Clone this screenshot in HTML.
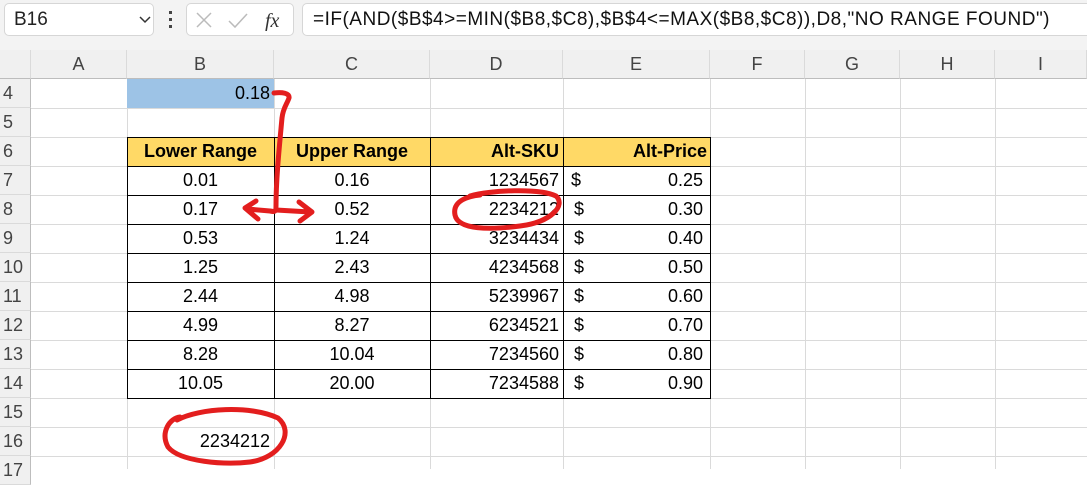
<!DOCTYPE html>
<html><head><meta charset="utf-8"><style>
*{margin:0;padding:0;box-sizing:border-box}
body{width:1087px;height:466px;overflow:hidden;background:#fff;font-family:"Liberation Sans",Arial,sans-serif;position:relative}
.top{position:absolute;left:0;top:0;width:1087px;height:50px;background:#f3f3f3}
.box{position:absolute;background:#fff;border:1px solid #d6d6d6;border-radius:5px}
.colh{position:absolute;top:50px;height:29px;background:#f0f0f0;border-bottom:1px solid #bdbdbd;color:#444;font-size:18px;text-align:center;line-height:29px;border-right:1px solid #dadada}
.rowh{position:absolute;left:0;width:31px;height:29px;background:#f0f0f0;border-right:1px solid #bdbdbd;border-bottom:1px solid #dadada;color:#444;font-size:18px;line-height:29px;padding-left:3px}
.c{position:absolute;height:29px;line-height:29px;font-size:18px;color:#000;white-space:nowrap}
.vl{position:absolute;top:79px;width:1px;height:390px;background:#dadada}
.hl{position:absolute;left:31px;width:1056px;height:1px;background:#dadada}
</style></head><body>
<div class="top"></div>
<div class="box" style="left:4px;top:3px;width:150px;height:33px"><span style="position:absolute;left:9px;top:5px;font-size:19px;color:#222">B16</span><svg style="position:absolute;left:134px;top:12px" width="12" height="8"><path d="M1 1 L6 6 L11 1" stroke="#333" stroke-width="1.5" fill="none"/></svg></div>
<div style="position:absolute;left:169px;top:11px;width:3px;height:17px"><div style="width:3px;height:3px;background:#444;margin-bottom:4px"></div><div style="width:3px;height:3px;background:#444;margin-bottom:4px"></div><div style="width:3px;height:3px;background:#444"></div></div>
<div class="box" style="left:186px;top:3px;width:108px;height:33px"><svg style="position:absolute;left:8px;top:7px" width="90" height="20"><path d="M2 2 L16 16 M16 2 L2 16" stroke="#bbb" stroke-width="1.5"/><path d="M34 10 L40 16 L52 3" stroke="#bbb" stroke-width="1.5" fill="none"/><text x="70" y="16" font-family="Liberation Serif" font-style="italic" font-size="20" fill="#333">fx</text></svg></div>
<div class="box" style="left:302px;top:3px;width:790px;height:33px"><span style="position:absolute;left:10px;top:5px;font-size:19px;color:#111;letter-spacing:0.5px">=IF(AND($B$4&gt;=MIN($B8,$C8),$B$4&lt;=MAX($B8,$C8)),D8,"NO RANGE FOUND")</span></div>

<div class="colh" style="left:0;width:31px"></div>
<div class="colh" style="left:31px;width:96px">A</div>
<div class="colh" style="left:127px;width:147px">B</div>
<div class="colh" style="left:274px;width:156px">C</div>
<div class="colh" style="left:430px;width:133px">D</div>
<div class="colh" style="left:563px;width:147px">E</div>
<div class="colh" style="left:710px;width:95px">F</div>
<div class="colh" style="left:805px;width:95px">G</div>
<div class="colh" style="left:900px;width:95px">H</div>
<div class="colh" style="left:995px;width:92px">I</div>

<div class="vl" style="left:127px"></div><div class="vl" style="left:274px"></div><div class="vl" style="left:430px"></div><div class="vl" style="left:563px"></div><div class="vl" style="left:710px"></div><div class="vl" style="left:805px"></div><div class="vl" style="left:900px"></div><div class="vl" style="left:995px"></div>
<div class="hl" style="top:108px"></div><div class="hl" style="top:137px"></div><div class="hl" style="top:166px"></div><div class="hl" style="top:195px"></div><div class="hl" style="top:224px"></div><div class="hl" style="top:253px"></div><div class="hl" style="top:282px"></div><div class="hl" style="top:311px"></div><div class="hl" style="top:340px"></div><div class="hl" style="top:369px"></div><div class="hl" style="top:398px"></div><div class="hl" style="top:427px"></div><div class="hl" style="top:456px"></div>

<div class="rowh" style="top:79px">4</div><div class="rowh" style="top:108px">5</div><div class="rowh" style="top:137px">6</div><div class="rowh" style="top:166px">7</div><div class="rowh" style="top:195px">8</div><div class="rowh" style="top:224px">9</div><div class="rowh" style="top:253px">10</div><div class="rowh" style="top:282px">11</div><div class="rowh" style="top:311px">12</div><div class="rowh" style="top:340px">13</div><div class="rowh" style="top:369px">14</div><div class="rowh" style="top:398px">15</div><div class="rowh" style="top:427px">16</div><div class="rowh" style="top:456px">17</div>

<div style="position:absolute;left:127px;top:79px;width:147px;height:29px;background:#9dc3e6"></div>
<div class="c" style="left:127px;top:79px;width:143px;text-align:right">0.18</div>

<div style="position:absolute;left:127px;top:137px;width:583px;height:29px;background:#ffd966"></div>
<div style="position:absolute;left:127px;top:137px;width:584px;height:262px;border:1px solid #000"></div>
<svg style="position:absolute;left:0;top:0" width="1087" height="466">
<g stroke="#000" stroke-width="1">
<path d="M274.5 137 V399 M430.5 137 V399 M563.5 137 V399"/>
<path d="M127 166.5 H711 M127 195.5 H711 M127 224.5 H711 M127 253.5 H711 M127 282.5 H711 M127 311.5 H711 M127 340.5 H711 M127 369.5 H711"/>
</g>
</svg>
<div class="c" style="left:127px;top:137px;width:147px;text-align:center;font-weight:bold">Lower Range</div>
<div class="c" style="left:274px;top:137px;width:156px;text-align:center;font-weight:bold">Upper Range</div>
<div class="c" style="left:430px;top:137px;width:129px;text-align:right;font-weight:bold">Alt-SKU</div>
<div class="c" style="left:563px;top:137px;width:144px;text-align:right;font-weight:bold">Alt-Price</div>

<div class="c" style="left:127px;top:166px;width:147px;text-align:center">0.01</div><div class="c" style="left:274px;top:166px;width:156px;text-align:center">0.16</div><div class="c" style="left:430px;top:166px;width:129px;text-align:right">1234567</div><div class="c" style="left:571px;top:166px">$</div><div class="c" style="left:563px;top:166px;width:140px;text-align:right">0.25</div>
<div class="c" style="left:127px;top:195px;width:147px;text-align:center">0.17</div><div class="c" style="left:274px;top:195px;width:156px;text-align:center">0.52</div><div class="c" style="left:430px;top:195px;width:129px;text-align:right">2234212</div><div class="c" style="left:574px;top:195px">$</div><div class="c" style="left:563px;top:195px;width:140px;text-align:right">0.30</div>
<div class="c" style="left:127px;top:224px;width:147px;text-align:center">0.53</div><div class="c" style="left:274px;top:224px;width:156px;text-align:center">1.24</div><div class="c" style="left:430px;top:224px;width:129px;text-align:right">3234434</div><div class="c" style="left:574px;top:224px">$</div><div class="c" style="left:563px;top:224px;width:140px;text-align:right">0.40</div>
<div class="c" style="left:127px;top:253px;width:147px;text-align:center">1.25</div><div class="c" style="left:274px;top:253px;width:156px;text-align:center">2.43</div><div class="c" style="left:430px;top:253px;width:129px;text-align:right">4234568</div><div class="c" style="left:574px;top:253px">$</div><div class="c" style="left:563px;top:253px;width:140px;text-align:right">0.50</div>
<div class="c" style="left:127px;top:282px;width:147px;text-align:center">2.44</div><div class="c" style="left:274px;top:282px;width:156px;text-align:center">4.98</div><div class="c" style="left:430px;top:282px;width:129px;text-align:right">5239967</div><div class="c" style="left:574px;top:282px">$</div><div class="c" style="left:563px;top:282px;width:140px;text-align:right">0.60</div>
<div class="c" style="left:127px;top:311px;width:147px;text-align:center">4.99</div><div class="c" style="left:274px;top:311px;width:156px;text-align:center">8.27</div><div class="c" style="left:430px;top:311px;width:129px;text-align:right">6234521</div><div class="c" style="left:574px;top:311px">$</div><div class="c" style="left:563px;top:311px;width:140px;text-align:right">0.70</div>
<div class="c" style="left:127px;top:340px;width:147px;text-align:center">8.28</div><div class="c" style="left:274px;top:340px;width:156px;text-align:center">10.04</div><div class="c" style="left:430px;top:340px;width:129px;text-align:right">7234560</div><div class="c" style="left:574px;top:340px">$</div><div class="c" style="left:563px;top:340px;width:140px;text-align:right">0.80</div>
<div class="c" style="left:127px;top:369px;width:147px;text-align:center">10.05</div><div class="c" style="left:274px;top:369px;width:156px;text-align:center">20.00</div><div class="c" style="left:430px;top:369px;width:129px;text-align:right">7234588</div><div class="c" style="left:574px;top:369px">$</div><div class="c" style="left:563px;top:369px;width:140px;text-align:right">0.90</div>
<div class="c" style="left:127px;top:427px;width:143px;text-align:right">2234212</div>

<svg style="position:absolute;left:0;top:0" width="1087" height="466">
<g stroke="#e31e1e" stroke-width="5" fill="none" stroke-linecap="round" stroke-linejoin="round">
<path d="M274 93 C282 92 290 93 289 98 C287 104 283 108 282 118 C279 150 276 180 276 206 C276 212 275 212 270 211 L247 209 M256 201 L245 208 L258 219"/>
<path d="M276 210 L310 212 M299 202 L312 212 L300 221"/>
<path d="M470 196 C490 190 540 188 556 196 C566 205 552 222 520 226 C490 230 458 230 455 215 C452 200 470 196 480 195"/>
<path d="M177 420 C200 408 250 405 278 418 C295 432 280 458 250 462 C225 465 180 462 168 447 C160 432 170 418 180 417"/>
</g>
</svg>
</body></html>
